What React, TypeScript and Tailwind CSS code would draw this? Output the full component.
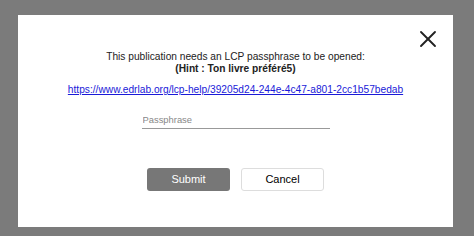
import { X } from 'lucide-react'

export default function App() {
  return (
    <div className="w-[474px] h-[236px] bg-[#7b7b7b] pt-[15px] pl-[18px] font-['Liberation_Sans',Arial,sans-serif]">
      <div className="relative w-[435px] h-[212px] bg-white flex flex-col items-center pt-[36px]">
        <button className="absolute top-[10px] right-[11px] text-[#222]">
          <X size={28} strokeWidth={1.6} />
        </button>
        <p className="text-[10.2px] leading-[12px] text-[#222] text-center">
          This publication needs an LCP passphrase to be opened:
        </p>
        <p className="text-[10.2px] leading-[12px] font-bold text-[#222] text-center">
          (Hint : Ton livre préféré5)
        </p>
        <a
          href="#"
          className="mt-[9px] text-[10.2px] leading-[12px] text-[#1a1ad8] underline"
        >
          https://www.edrlab.org/lcp-help/39205d24-244e-4c47-a801-2cc1b57bedab
        </a>
        <input
          placeholder="Passphrase"
          className="mt-[18px] w-[188px] border-b border-[#999] text-[9.4px] leading-[12px] px-[1px] pb-[2px] placeholder:text-[#888] outline-none"
        />
        <div className="mt-[39px] flex gap-[11px]">
          <button className="w-[83px] h-[23px] rounded-[3px] bg-[#777] text-white text-[11px]">
            Submit
          </button>
          <button className="w-[83px] h-[23px] rounded-[3px] bg-white border border-[#ddd] text-black text-[11px]">
            Cancel
          </button>
        </div>
      </div>
    </div>
  )
}
